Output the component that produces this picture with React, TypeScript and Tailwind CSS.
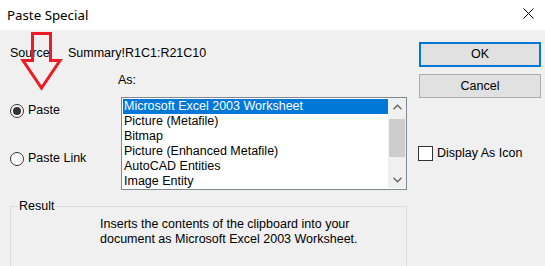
const FORMATS = [
  "Microsoft Excel 2003 Worksheet",
  "Picture (Metafile)",
  "Bitmap",
  "Picture (Enhanced Metafile)",
  "AutoCAD Entities",
  "Image Entity",
];

function Radio({ checked }: { checked?: boolean }) {
  return (
    <span className="flex h-[14px] w-[14px] shrink-0 items-center justify-center rounded-full border border-[#333] bg-white">
      {checked && <span className="h-[8px] w-[8px] rounded-full bg-[#333]" />}
    </span>
  );
}

function Chevron({ down }: { down?: boolean }) {
  return (
    <svg width="9" height="6" viewBox="0 0 9 6" className="block">
      <path
        d={down ? "M0.5 0.8 L4.5 4.8 L8.5 0.8" : "M0.5 5.2 L4.5 1.2 L8.5 5.2"}
        fill="none"
        stroke="#606060"
        strokeWidth="1.3"
      />
    </svg>
  );
}

export default function App() {
  return (
    <div className="relative h-[266px] w-[545px] overflow-hidden bg-[#f0f0f0] font-['Liberation_Sans',Arial,sans-serif] text-[12.5px] leading-[15px] text-black">
      {/* title bar */}
      <div className="flex h-[30px] items-start justify-between bg-white pl-[7px] pr-[11px]">
        <span className="mt-[5px] font-['Noto_Sans',sans-serif] text-[13.3px] leading-[20px]">
          Paste Special
        </span>
        <svg width="11" height="11" viewBox="0 0 11 11" className="mt-[8px]">
          <path d="M0.5 0.5 L10.5 10.5 M10.5 0.5 L0.5 10.5" stroke="#000" strokeWidth="1" />
        </svg>
      </div>

      <div className="flex">
        {/* left side */}
        <div className="ml-[10px] w-[397px]">
          <div className="mt-[16px] flex">
            <span className="w-[58px]">Source:</span>
            <span>Summary!R1C1:R21C10</span>
          </div>
          <div className="mt-[12px] pl-[108px]">As:</div>

          <div className="mt-[9px] flex">
            <div className="w-[111px] pt-[6px]">
              <label className="flex items-center gap-[4px]">
                <Radio checked />
                <span>Paste</span>
              </label>
              <label className="mt-[33px] flex items-center gap-[4px]">
                <Radio />
                <span>Paste Link</span>
              </label>
            </div>

            <div className="flex h-[93px] w-[286px] border border-[#828790] bg-white p-[1px] pr-0">
              <ul className="flex-1">
                {FORMATS.map((f, i) => (
                  <li
                    key={f}
                    className={
                      i === 0
                        ? "h-[15px] bg-[#0078d7] pl-[1px] text-white"
                        : "h-[15px] pl-[1px]"
                    }
                  >
                    {f}
                  </li>
                ))}
              </ul>
              <div className="-mt-[1px] flex w-[18px] flex-col bg-[#f0f0f0]">
                <div className="flex h-[17px] items-center justify-center">
                  <Chevron />
                </div>
                <div className="mx-[1px] mt-[4px] h-[38px] bg-[#cdcdcd]" />
                <div className="flex-1" />
                <div className="flex h-[17px] items-center justify-center">
                  <Chevron down />
                </div>
              </div>
            </div>
          </div>

          <fieldset className="mt-[9px] h-[80px] border border-[#dcdcdc] px-0">
            <legend className="ml-[7px] px-[1px] leading-[15px]">Result</legend>
            <p className="pl-[89px] pt-[3px]">
              Inserts the contents of the clipboard into your
              <br />
              document as Microsoft Excel 2003 Worksheet.
            </p>
          </fieldset>
        </div>

        {/* right side */}
        <div className="ml-[11px] flex w-[123px] flex-col">
          <button className="ml-[1px] mt-[12px] h-[25px] w-[122px] border-2 border-[#0078d7] bg-[#e1e1e1]">
            OK
          </button>
          <button className="ml-[1px] mt-[7px] h-[24px] w-[122px] border border-[#adadad] bg-[#e1e1e1]">
            Cancel
          </button>
          <label className="mt-[48px] flex items-center gap-[4px]">
            <span className="h-[15px] w-[15px] shrink-0 border border-[#333] bg-white" />
            <span>Display As Icon</span>
          </label>
        </div>
      </div>

      {/* red annotation arrow */}
      <svg
        width="46"
        height="64"
        viewBox="0 0 46 64"
        className="pointer-events-none absolute left-[19px] top-[30px]"
      >
        <path
          d="M13.5 3.5 H31.5 V30.5 H41 L22.5 58 L4 30.5 H13.5 Z"
          fill="none"
          stroke="#ed1c24"
          strokeWidth="3"
          strokeLinejoin="miter"
        />
      </svg>
    </div>
  );
}
